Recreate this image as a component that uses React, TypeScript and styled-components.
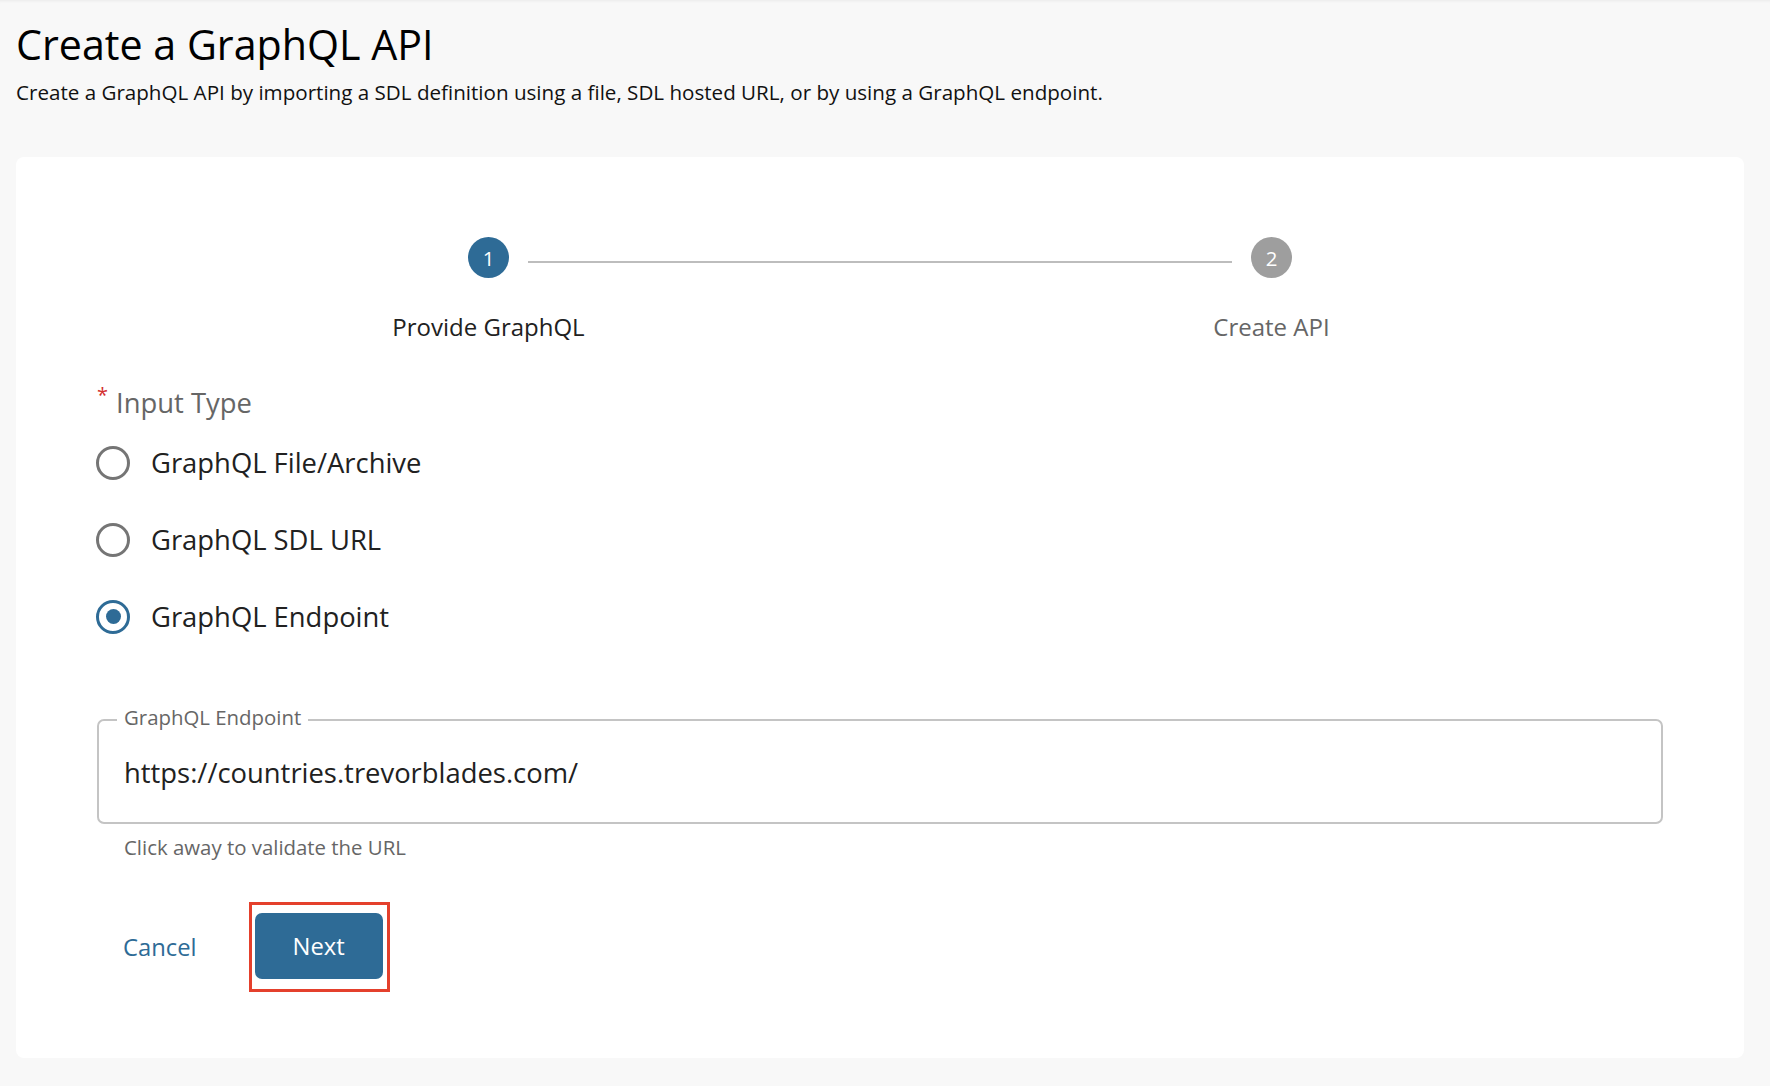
import styled, { createGlobalStyle } from 'styled-components';

const GlobalStyle = createGlobalStyle`
  html, body {
    margin: 0;
    padding: 0;
    background: #f8f8f8;
  }

  body {
    font-family: "Open Sans", "Noto Sans", "Liberation Sans", sans-serif;
    -webkit-font-smoothing: antialiased;
  }

  * {
    box-sizing: border-box;
  }
`;

const primary = '#2e6b96';

const steps = [
  { id: 1, label: 'Provide GraphQL' },
  { id: 2, label: 'Create API' },
];

const inputTypes = [
  { id: 'file', label: 'GraphQL File/Archive' },
  { id: 'url', label: 'GraphQL SDL URL' },
  { id: 'endpoint', label: 'GraphQL Endpoint' },
];

export default function App() {
  const activeStep = 1;
  const selectedType = 'endpoint';

  return (
    <>
      <GlobalStyle />
      <Page>
        <Title>Create a GraphQL API</Title>
        <Subtitle>
          Create a GraphQL API by importing a SDL definition using a file, SDL hosted URL, or by
          using a GraphQL endpoint.
        </Subtitle>

        <Card>
          <StepTrack>
            <span />
            <StepCircle $active={activeStep === 1}>1</StepCircle>
            <Connector />
            <StepCircle $active={activeStep === 2}>2</StepCircle>
            <span />
          </StepTrack>
          <StepLabels>
            {steps.map((step) => (
              <StepLabel key={step.id} $active={step.id === activeStep}>
                {step.label}
              </StepLabel>
            ))}
          </StepLabels>

          <GroupLabel>
            <Required>*</Required>
            Input Type
          </GroupLabel>
          <RadioGroup>
            {inputTypes.map((type) => (
              <RadioRow key={type.id}>
                <RadioRing $checked={type.id === selectedType}>
                  {type.id === selectedType && <RadioDot />}
                </RadioRing>
                <RadioText>{type.label}</RadioText>
              </RadioRow>
            ))}
          </RadioGroup>

          <Outline>
            <Legend>GraphQL Endpoint</Legend>
            <UrlInput defaultValue="https://countries.trevorblades.com/" />
          </Outline>
          <HelperText>Click away to validate the URL</HelperText>

          <Actions>
            <CancelButton type="button">Cancel</CancelButton>
            <Highlight>
              <NextButton type="button">Next</NextButton>
            </Highlight>
          </Actions>
        </Card>
      </Page>
    </>
  );
}

const Page = styled.div`
  min-height: 100vh;
  padding: 17px 26px 28px 16px;
  background: #f8f8f8;
  box-shadow: inset 0 3px 3px -2px rgba(0, 0, 0, 0.06);
`;

const Title = styled.h1`
  margin: 0;
  color: #000;
  font-size: 41.2px;
  font-weight: 400;
  line-height: 54.4px;
`;

const Subtitle = styled.p`
  margin: 4px 0 0;
  color: #111;
  font-size: 20.6px;
  line-height: 34px;
`;

const Card = styled.section`
  margin-top: 48px;
  padding: 80px 81px 66px;
  border-radius: 8px;
  background: #fff;
`;

const StepTrack = styled.div`
  display: grid;
  grid-template-columns: 1fr 41px 2fr 41px 1fr;
  align-items: center;
`;

const StepCircle = styled.div<{ $active: boolean }>`
  display: flex;
  align-items: center;
  justify-content: center;
  width: 41px;
  height: 41px;
  border-radius: 50%;
  background: ${({ $active }) => ($active ? primary : '#9e9e9e')};
  color: #fff;
  font-size: 20.4px;
  line-height: 1;
`;

const Connector = styled.div`
  height: 2px;
  margin: 8px 19px 0;
  background: #bdbdbd;
`;

const StepLabels = styled.div`
  display: grid;
  grid-template-columns: 1fr 1fr;
  margin-top: 32px;
`;

const StepLabel = styled.div<{ $active: boolean }>`
  color: ${({ $active }) => ($active ? '#212121' : '#666')};
  font-size: 24px;
  line-height: 34px;
  text-align: center;
`;

const GroupLabel = styled.div`
  margin-top: 39px;
  color: #666;
  font-size: 27.4px;
  line-height: 40.8px;
`;

const Required = styled.span`
  display: inline-block;
  margin-right: 8px;
  padding-top: 2px;
  color: #d32f2f;
  font-size: 20px;
  line-height: 20px;
  vertical-align: top;
`;

const RadioGroup = styled.div`
  display: flex;
  flex-direction: column;
`;

const RadioRow = styled.label`
  display: flex;
  align-items: center;
  height: 77px;
  margin-left: -1px;
  cursor: pointer;
`;

const RadioRing = styled.span<{ $checked: boolean }>`
  display: flex;
  align-items: center;
  justify-content: center;
  flex: none;
  width: 34px;
  height: 34px;
  margin-right: 21px;
  border: 3.4px solid ${({ $checked }) => ($checked ? primary : '#757575')};
  border-radius: 50%;
`;

const RadioDot = styled.span`
  width: 15px;
  height: 15px;
  border-radius: 50%;
  background: ${primary};
`;

const RadioText = styled.span`
  color: #212121;
  font-size: 27.4px;
  line-height: 40px;
`;

const Outline = styled.fieldset`
  margin: 50px 0 0;
  padding: 0 18px 12px;
  border: 2px solid #c4c4c4;
  border-radius: 7px;
`;

const Legend = styled.legend`
  padding: 0 7px 6px;
  color: #666;
  font-size: 20.4px;
  line-height: 24px;
`;

const UrlInput = styled.input`
  display: block;
  width: 100%;
  height: 75px;
  padding: 0 7px;
  border: 0;
  outline: none;
  background: transparent;
  color: #212121;
  font-family: inherit;
  font-size: 27.4px;
`;

const HelperText = styled.p`
  margin: 6px 0 0;
  padding-left: 27px;
  color: #666;
  font-size: 20.4px;
  line-height: 34px;
`;

const Actions = styled.div`
  display: flex;
  align-items: center;
  margin-top: 38px;
`;

const CancelButton = styled.button`
  margin: 0 52px 0 26px;
  padding: 0;
  border: 0;
  background: none;
  color: ${primary};
  font-family: inherit;
  font-size: 23.8px;
  font-weight: 500;
  cursor: pointer;
`;

const Highlight = styled.div`
  padding: 8px 4px 10px 3px;
  border: 3px solid #e4402c;
`;

const NextButton = styled.button`
  display: block;
  width: 128px;
  height: 66px;
  border: 0;
  border-radius: 7px;
  background: ${primary};
  color: #fff;
  font-family: inherit;
  font-size: 23.8px;
  font-weight: 500;
  cursor: pointer;
`;
